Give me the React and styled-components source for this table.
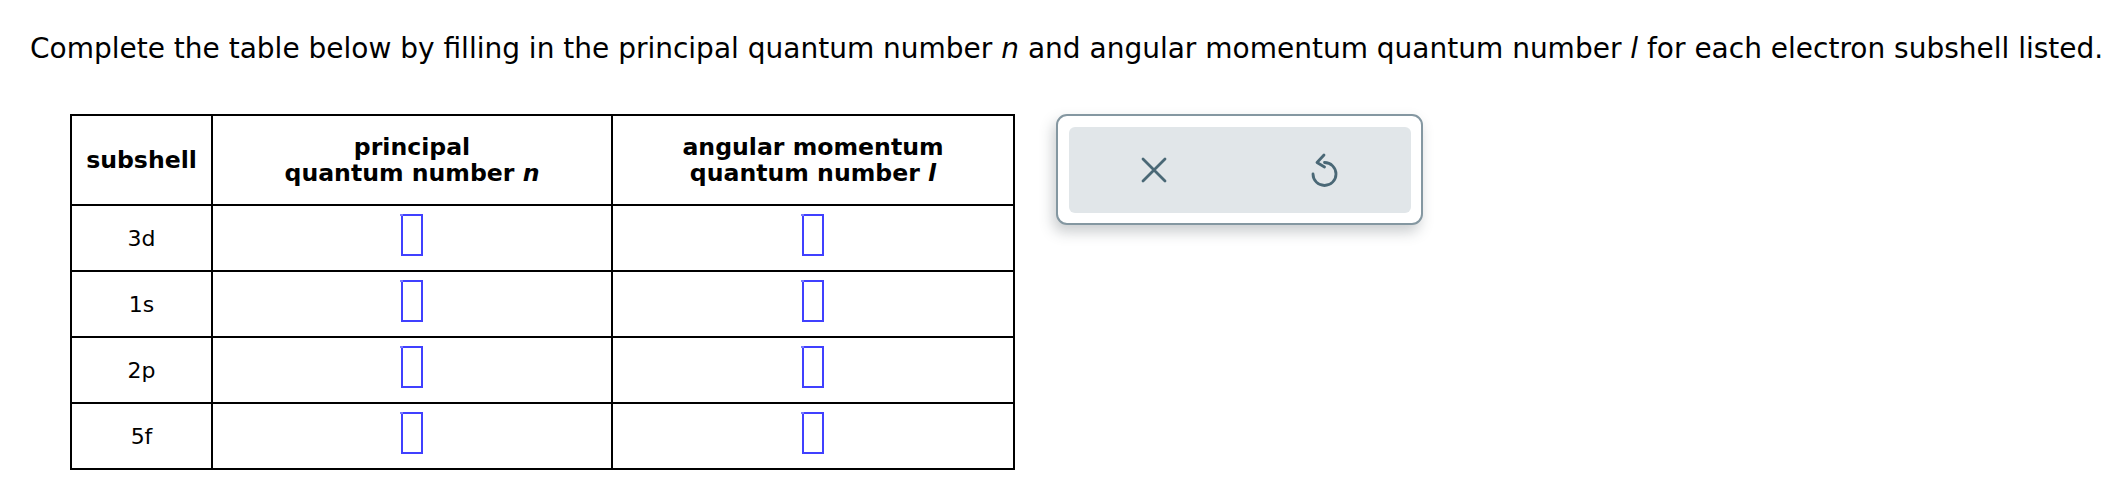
import React from "react";
import styled, { createGlobalStyle } from "styled-components";

const GlobalStyle = createGlobalStyle`
  html, body { margin: 0; padding: 0; background: #ffffff; }
  body { font-family: "DejaVu Sans", Verdana, sans-serif; color: #000; }
`;

const Page = styled.div`
  padding: 33px 0 0 30px;
`;

const Prompt = styled.p`
  margin: 0;
  font-size: 28px;
  line-height: 31px;
  white-space: nowrap;
`;

const Workspace = styled.div`
  display: flex;
  align-items: flex-start;
  gap: 41px;
  margin-top: 50px;
  padding-left: 40px;
`;

const Table = styled.table`
  border-collapse: collapse;
  table-layout: fixed;
  width: 943px;
  border: 2px solid #000;
`;

const HeadRow = styled.tr`
  height: 90px;
`;

const BodyRow = styled.tr`
  height: 66px;
`;

const HeadCell = styled.th`
  border: 2px solid #000;
  padding: 0;
  font-size: 23.6px;
  line-height: 26px;
  font-weight: bold;
  text-align: center;
  vertical-align: middle;
`;

const Cell = styled.td`
  border: 2px solid #000;
  padding: 0;
  font-size: 22px;
  text-align: center;
  vertical-align: middle;
`;

const CellInner = styled.div`
  display: flex;
  justify-content: center;
  align-items: center;
  height: 62px;
`;

const AnswerBox = styled.span`
  position: relative;
  display: block;
  box-sizing: border-box;
  width: 22px;
  height: 42px;
  margin-bottom: 6px;
  border: 2px solid #4040ff;
  &::before {
    content: "";
    position: absolute;
    left: -3px;
    top: -2px;
    width: 3px;
    height: 2px;
    background: #7a7aff;
  }
`;

const Panel = styled.div`
  box-sizing: border-box;
  width: 367px;
  height: 111px;
  padding: 10.5px;
  background: #fff;
  border: 2px solid #8497a1;
  border-radius: 11px;
  box-shadow: -3px 7px 14px rgba(50, 60, 70, 0.26);
`;

const ButtonTray = styled.div`
  display: flex;
  height: 100%;
  background: #e1e6e9;
  border-radius: 6px;
`;

const ToolButton = styled.button`
  flex: 1;
  display: flex;
  align-items: center;
  justify-content: center;
  padding: 0;
  border: none;
  background: transparent;
  color: #4a6876;
  cursor: pointer;
`;

const CloseIcon = () => (
  <svg width="26" height="26" viewBox="0 0 26 26" fill="none" stroke="currentColor" strokeWidth="2.8" strokeLinecap="round">
    <path d="M2 2 L24 24 M24 2 L2 24" />
  </svg>
);

const UndoIcon = () => (
  <svg width="28" height="34" viewBox="0 0 28 34" fill="none" stroke="currentColor" strokeWidth="2.8" strokeLinecap="round" strokeLinejoin="round">
    <path d="M13.5 9.5 A11.5 11.5 0 1 1 2 21" />
    <path d="M13 2 L6 9.5 L13.5 14" />
  </svg>
);

const rows = ["3d", "1s", "2p", "5f"];

export default function App() {
  return (
    <>
      <GlobalStyle />
      <Page>
        <Prompt>
          Complete the table below by filling in the principal quantum number <i>n</i> and angular momentum quantum number <i>l</i> for each electron subshell listed.
        </Prompt>
        <Workspace>
          <Table>
            <colgroup>
              <col style={{ width: 141 }} />
              <col style={{ width: 400 }} />
              <col style={{ width: 402 }} />
            </colgroup>
            <thead>
              <HeadRow>
                <HeadCell>subshell</HeadCell>
                <HeadCell>
                  principal
                  <br />
                  quantum number <i>n</i>
                </HeadCell>
                <HeadCell>
                  angular momentum
                  <br />
                  quantum number <i>l</i>
                </HeadCell>
              </HeadRow>
            </thead>
            <tbody>
              {rows.map((r) => (
                <BodyRow key={r}>
                  <Cell>{r}</Cell>
                  <Cell>
                    <CellInner>
                      <AnswerBox />
                    </CellInner>
                  </Cell>
                  <Cell>
                    <CellInner>
                      <AnswerBox />
                    </CellInner>
                  </Cell>
                </BodyRow>
              ))}
            </tbody>
          </Table>
          <Panel>
            <ButtonTray>
              <ToolButton aria-label="clear">
                <CloseIcon />
              </ToolButton>
              <ToolButton aria-label="undo">
                <UndoIcon />
              </ToolButton>
            </ButtonTray>
          </Panel>
        </Workspace>
      </Page>
    </>
  );
}
